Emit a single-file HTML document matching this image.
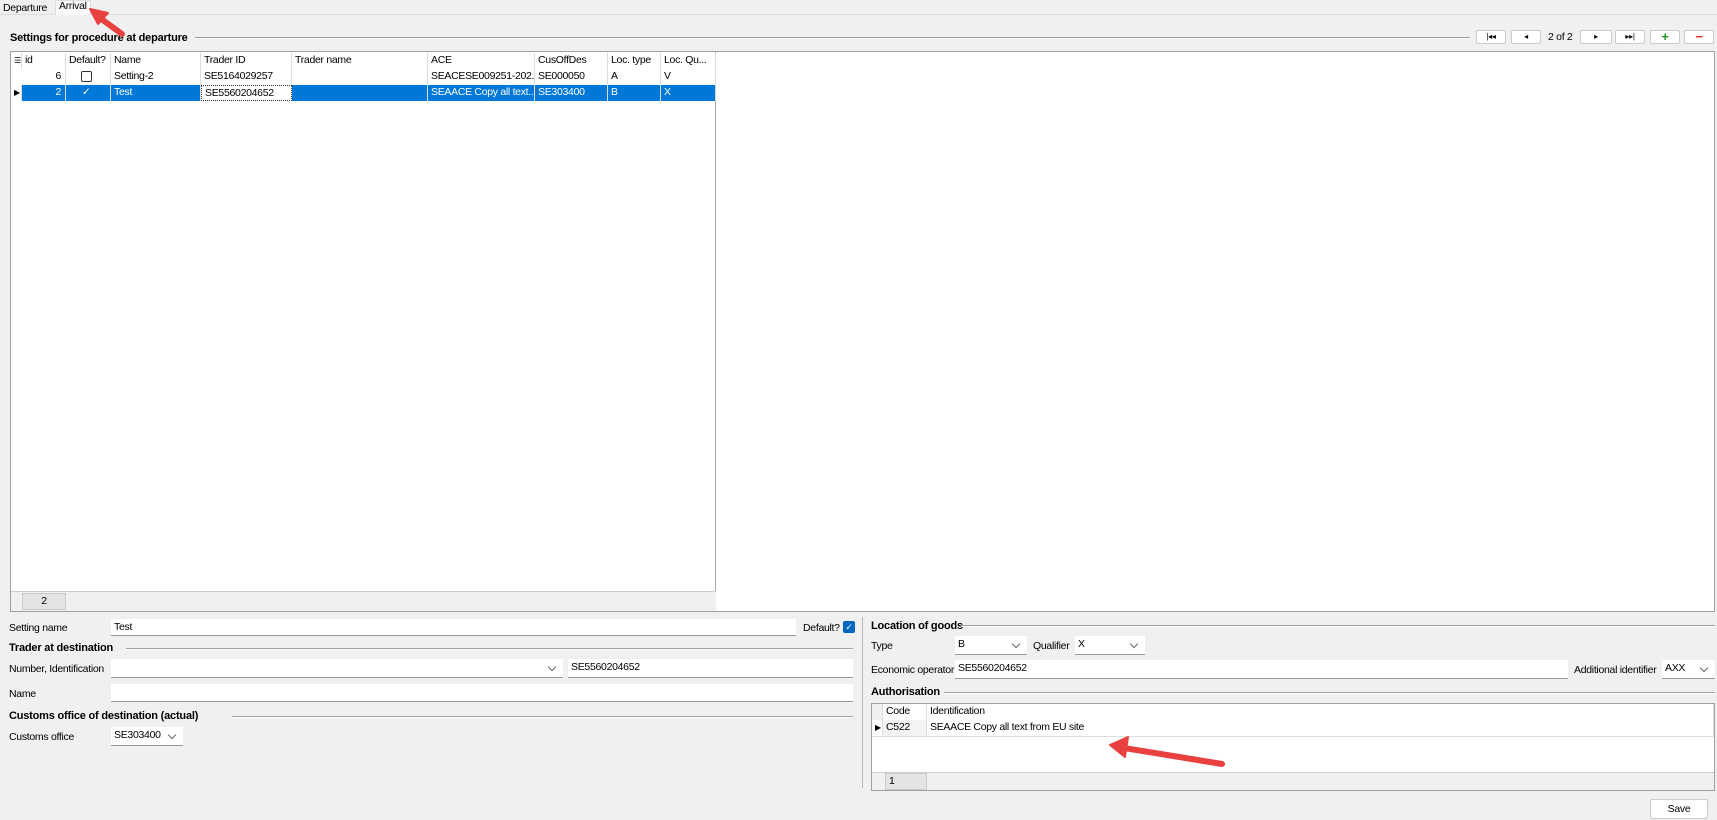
<!DOCTYPE html>
<html><head><meta charset="utf-8"><style>
*{box-sizing:border-box;margin:0;padding:0}
body{width:1717px;height:820px;background:#f0f0f0;font-family:"Liberation Sans",Arial,sans-serif;font-size:10.5px;letter-spacing:-0.3px;color:#000;position:relative;overflow:hidden}
.a{position:absolute;white-space:nowrap}
.b{font-weight:bold;font-size:11px;letter-spacing:-0.2px}
.line{position:absolute;height:2px;border-top:1px solid #a0a0a0;border-bottom:1px solid #fff}
.inp{position:absolute;background:#fff;border-bottom:1px solid #999;padding:2px 3px;line-height:13px}
.cmb:after{content:"";position:absolute;right:8px;top:5px;width:5px;height:5px;border-right:1px solid #666;border-bottom:1px solid #666;transform:rotate(45deg)}
.btn{position:absolute;top:30px;height:14px;background:#fff;border:1px solid #ccc;border-radius:2px;font-size:8px;text-align:center;line-height:12px}
.grid{position:absolute;background:#fff;border:1px solid #a0a0a0}
.cell{position:absolute;height:16px;line-height:15px;padding-left:3px;border-right:1px solid #ddd;overflow:hidden}
</style></head><body>
<div class="a" style="left:0;top:0;width:1717px;height:15px;background:#f0f0f0;border-bottom:1px solid #ddd"></div>
<div class="a" style="left:3px;top:2px">Departure</div>
<div class="a" style="left:55px;top:0;width:36px;height:15px;background:#fafafa;border:1px solid #ddd;border-bottom:none"></div>
<div class="a" style="left:59px;top:0">Arrival</div>

<div class="a b" style="left:10px;top:32px">Settings for procedure at departure</div>
<div class="line" style="left:195px;top:37px;width:1275px"></div>
<div class="btn" style="left:1476px;width:30px">|◂◂</div>
<div class="btn" style="left:1511px;width:30px">◂</div>
<div class="a" style="left:1548px;top:31px">2 of 2</div>
<div class="btn" style="left:1580px;width:32px">▸</div>
<div class="btn" style="left:1615px;width:30px">▸▸|</div>
<div class="btn" style="left:1650px;width:30px;color:#1a9a1a;font-size:13px;font-weight:bold;line-height:12px">+</div>
<div class="btn" style="left:1684px;width:30px;color:#e03030;font-size:13px;font-weight:bold;line-height:11px">−</div>

<div class="grid" style="left:10px;top:51px;width:1705px;height:561px"></div>
<div class="a" style="left:11px;top:52px;width:705px;height:559px;border-right:1px solid #aaa"></div>
<div class="a" style="left:11px;top:53px;width:705px;height:16px">
<div class="cell" style="left:0;width:11px;font-size:8px">☰</div>
<div class="cell" style="left:11px;width:44px">id</div>
<div class="cell" style="left:55px;width:45px">Default?</div>
<div class="cell" style="left:100px;width:90px">Name</div>
<div class="cell" style="left:190px;width:91px">Trader ID</div>
<div class="cell" style="left:281px;width:136px">Trader name</div>
<div class="cell" style="left:417px;width:107px">ACE</div>
<div class="cell" style="left:524px;width:73px">CusOffDes</div>
<div class="cell" style="left:597px;width:53px">Loc. type</div>
<div class="cell" style="left:650px;width:55px">Loc. Qu...</div>
</div>
<div class="a" style="left:11px;top:69px;width:705px;height:16px">
<div class="cell" style="left:11px;width:44px;text-align:right;padding-right:4px">6</div>
<div class="cell" style="left:55px;width:45px"><span style="display:inline-block;width:11px;height:11px;border:1px solid #333;border-radius:2px;margin:2px 0 0 12px"></span></div>
<div class="cell" style="left:100px;width:90px">Setting-2</div>
<div class="cell" style="left:190px;width:91px">SE5164029257</div>
<div class="cell" style="left:281px;width:136px"></div>
<div class="cell" style="left:417px;width:107px">SEACESE009251-202...</div>
<div class="cell" style="left:524px;width:73px">SE000050</div>
<div class="cell" style="left:597px;width:53px">A</div>
<div class="cell" style="left:650px;width:55px">V</div>
</div>
<div class="a" style="left:11px;top:85px;width:705px;height:16px;background:#0078d7;color:#fff">
<div class="cell" style="left:0;width:11px;background:#fff;color:#000;font-size:8px">▶</div>
<div class="cell" style="left:11px;width:44px;text-align:right;padding-right:4px">2</div>
<div class="cell" style="left:55px;width:45px;padding-left:16px">✓</div>
<div class="cell" style="left:100px;width:90px">Test</div>
<div class="cell" style="left:190px;width:91px;background:#fff;color:#000;border:1px dotted #333">SE5560204652</div>
<div class="cell" style="left:281px;width:136px"></div>
<div class="cell" style="left:417px;width:107px">SEAACE Copy all text...</div>
<div class="cell" style="left:524px;width:73px">SE303400</div>
<div class="cell" style="left:597px;width:53px">B</div>
<div class="cell" style="left:650px;width:55px">X</div>
</div>
<div class="a" style="left:11px;top:591px;width:705px;height:20px;background:#f0f0f0;border-top:1px solid #ccc"></div>
<div class="a" style="left:22px;top:593px;width:44px;height:17px;background:#e3e3e3;border:1px solid #ccc;text-align:center;line-height:15px">2</div>

<div class="a" style="left:9px;top:622px">Setting name</div>
<div class="inp" style="left:111px;top:619px;width:685px;height:17px">Test</div>
<div class="a" style="left:803px;top:622px">Default?</div>
<div class="a" style="left:843px;top:621px;width:12px;height:12px;background:#0067c0;border-radius:2px;color:#fff;font-size:9px;text-align:center;line-height:12px">✓</div>
<div class="a b" style="left:9px;top:642px">Trader at destination</div>
<div class="line" style="left:126px;top:648px;width:727px"></div>
<div class="a" style="left:9px;top:663px">Number, Identification</div>
<div class="inp cmb" style="left:111px;top:659px;width:452px;height:19px"></div>
<div class="inp" style="left:568px;top:659px;width:285px;height:19px">SE5560204652</div>
<div class="a" style="left:9px;top:688px">Name</div>
<div class="inp" style="left:111px;top:684px;width:742px;height:18px"></div>
<div class="a b" style="left:9px;top:710px">Customs office of destination (actual)</div>
<div class="line" style="left:232px;top:716px;width:621px"></div>
<div class="a" style="left:9px;top:731px">Customs office</div>
<div class="inp cmb" style="left:111px;top:727px;width:72px;height:19px">SE303400</div>

<div class="a" style="left:862px;top:617px;width:1px;height:171px;background:#bbb"></div>

<div class="a b" style="left:871px;top:620px">Location of goods</div>
<div class="line" style="left:961px;top:625px;width:754px"></div>
<div class="a" style="left:871px;top:640px">Type</div>
<div class="inp cmb" style="left:955px;top:636px;width:72px;height:19px">B</div>
<div class="a" style="left:1033px;top:640px">Qualifier</div>
<div class="inp cmb" style="left:1075px;top:636px;width:70px;height:19px">X</div>
<div class="a" style="left:871px;top:664px">Economic operator</div>
<div class="inp" style="left:955px;top:660px;width:613px;height:19px">SE5560204652</div>
<div class="a" style="left:1574px;top:664px">Additional identifier</div>
<div class="inp cmb" style="left:1662px;top:660px;width:53px;height:19px">AXX</div>
<div class="a b" style="left:871px;top:686px">Authorisation</div>
<div class="line" style="left:944px;top:692px;width:771px"></div>
<div class="grid" style="left:871px;top:703px;width:844px;height:88px"></div>
<div class="a" style="left:872px;top:704px;width:842px;height:16px">
<div class="cell" style="left:0;width:11px;background:#f0f0f0"></div>
<div class="cell" style="left:11px;width:44px">Code</div>
<div class="cell" style="left:55px;width:787px">Identification</div>
</div>
<div class="a" style="left:872px;top:720px;width:842px;height:17px;border-bottom:1px solid #ddd">
<div class="cell" style="left:0;width:11px;font-size:8px">▶</div>
<div class="cell" style="left:11px;width:44px;background:#f3f3f3">C522</div>
<div class="cell" style="left:55px;width:787px">SEAACE Copy all text from EU site</div>
</div>
<div class="a" style="left:872px;top:772px;width:842px;height:18px;background:#f0f0f0;border-top:1px solid #ccc"></div>
<div class="a" style="left:885px;top:773px;width:42px;height:17px;background:#e3e3e3;border:1px solid #ccc;line-height:15px;padding-left:3px">1</div>

<div class="a" style="left:1650px;top:799px;width:58px;height:20px;background:#fff;border:1px solid #ccc;border-radius:2px;text-align:center;line-height:18px">Save</div>

<svg class="a" style="left:0;top:0" width="1717" height="820">
<g fill="#e94040" stroke="#e94040" stroke-linejoin="round">
<line x1="122" y1="34" x2="100" y2="18" stroke-width="6" stroke-linecap="round"/>
<polygon points="90,9 108,13 98,24" stroke-width="2"/>
<line x1="1222" y1="764" x2="1124" y2="748" stroke-width="6" stroke-linecap="round"/>
<polygon points="1110,745 1128,737 1125,757" stroke-width="2"/>
</g>
</svg>
</body></html>
